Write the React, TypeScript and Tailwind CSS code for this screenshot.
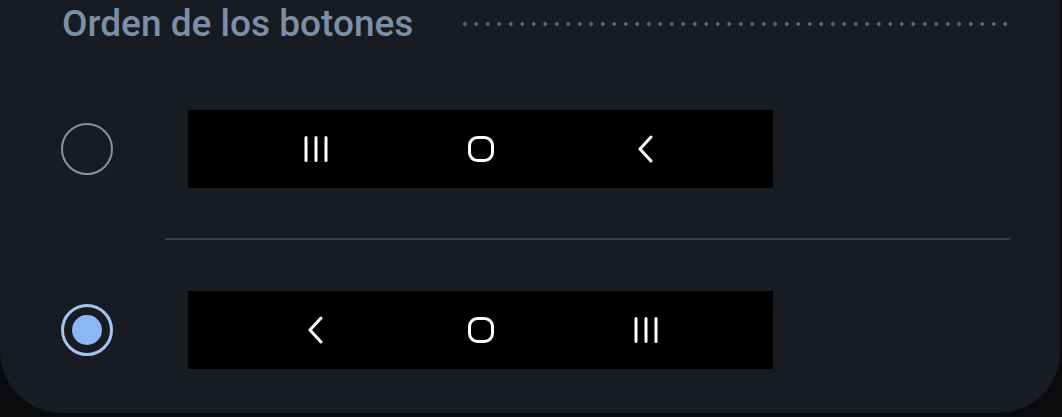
import React from "react";

const Recents = () => (
  <svg width="26" height="26" viewBox="0 0 26 26" fill="none" stroke="white" strokeWidth="3" strokeLinecap="round">
    <line x1="3" y1="1.5" x2="3" y2="24.5" />
    <line x1="13" y1="1.5" x2="13" y2="24.5" />
    <line x1="23" y1="1.5" x2="23" y2="24.5" />
  </svg>
);

const Home = () => (
  <svg width="28" height="28" viewBox="0 0 28 28" fill="none" stroke="white" strokeWidth="3">
    <rect x="2.5" y="2.5" width="23" height="23" rx="8" />
  </svg>
);

const Back = () => (
  <svg width="18" height="28" viewBox="0 0 18 28" fill="none" stroke="white" strokeWidth="3" strokeLinecap="round" strokeLinejoin="round">
    <path d="M14 2 L3 14 L14 26" />
  </svg>
);

const NavBar = ({ order }: { order: ("recents" | "home" | "back")[] }) => (
  <div className="flex h-[78px] w-[585px] items-center bg-black px-[45px]">
    {order.map((k) => (
      <div key={k} className="flex w-[165px] items-center justify-center">
        {k === "recents" && <Recents />}
        {k === "home" && <Home />}
        {k === "back" && <Back />}
      </div>
    ))}
  </div>
);

const Radio = ({ checked }: { checked?: boolean }) =>
  checked ? (
    <div className="flex h-[52px] w-[52px] items-center justify-center rounded-full border-[3px] border-[#a3c4ee]">
      <div className="h-[30px] w-[30px] rounded-full bg-[#8ab8f5]" />
    </div>
  ) : (
    <div className="h-[52px] w-[52px] rounded-full border-2 border-[#8d9096]" />
  );

export default function App() {
  return (
    <div className="h-[417px] w-[1062px] overflow-hidden bg-[#0a0b0d]" style={{ fontFamily: "Roboto, sans-serif" }}>
      <div className="h-[413px] w-[1060px] rounded-b-[62px] bg-[#181b21]">
        <div className="flex items-center pl-[62px] pr-[52px] pt-[2px]">
          <h2 className="text-[37px] font-medium leading-[44px] text-[#7d8fa6]">Orden de los botones</h2>
          <div className="ml-[46px] h-[4px] flex-1 bg-[radial-gradient(circle,#61656e_1.6px,transparent_1.9px)] bg-[length:11.5px_4px]" />
        </div>

        <div className="mt-[64px] flex items-center pl-[61px]">
          <Radio />
          <div className="ml-[75px]">
            <NavBar order={["recents", "home", "back"]} />
          </div>
        </div>

        <div className="ml-[165px] mr-[50px] mt-[50px] h-[2px] bg-[#3b3f46]" />

        <div className="mt-[51px] flex items-center pl-[61px]">
          <Radio checked />
          <div className="ml-[75px]">
            <NavBar order={["back", "home", "recents"]} />
          </div>
        </div>
      </div>
    </div>
  );
}
